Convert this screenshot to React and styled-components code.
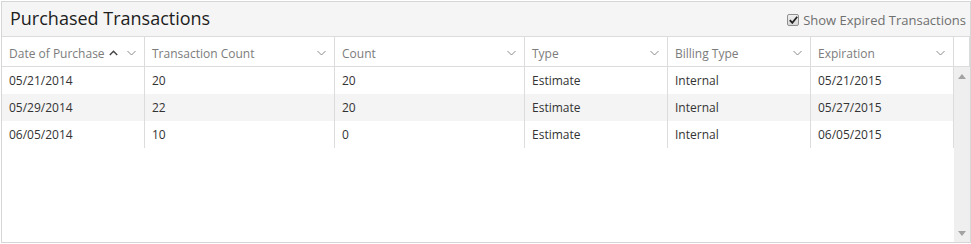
import React from 'react';
import styled, { createGlobalStyle } from 'styled-components';

const Global = createGlobalStyle`
  html, body { margin: 0; padding: 0; background: #fff; }
  body { font-family: 'Open Sans', 'Liberation Sans', sans-serif; }
`;

const Wrap = styled.div`
  padding: 1px 0 0 1px;
`;

const Panel = styled.div`
  width: 970px;
  height: 242px;
  box-sizing: border-box;
  border: 1px solid #d6d6d6;
  display: flex;
  flex-direction: column;
  background: #fff;
`;

const Header = styled.div`
  height: 35px;
  box-sizing: border-box;
  background: #f5f5f5;
  border-bottom: 1px solid #dcdcdc;
  display: flex;
  align-items: center;
  justify-content: space-between;
  padding: 0 4px 0 8px;
`;

const Title = styled.h2`
  margin: 0;
  font-size: 18px;
  font-weight: 400;
  color: #1d1d1d;
  position: relative;
  top: -1px;
`;

const CheckLabel = styled.label`
  display: flex;
  align-items: center;
  gap: 4px;
  font-size: 13px;
  color: #6f6f6f;
  position: relative;
  top: 1px;
`;

const Box = styled.span`
  width: 10px;
  height: 10px;
  border: 1px solid #8f8f8f;
  border-radius: 2px;
  background: linear-gradient(#f0f0f0, #d8d8d8);
  display: flex;
  align-items: center;
  justify-content: center;
`;

const Cols = '143px 190px 190px 143px 143px 143px 16px';

const HeadRow = styled.div`
  display: grid;
  grid-template-columns: ${Cols};
  height: 30px;
  box-sizing: border-box;
  border-bottom: 1px solid #dcdcdc;
`;

const HeadCell = styled.div`
  border-right: 1px solid #dcdcdc;
  display: flex;
  align-items: center;
  padding: 3px 8px 0 7px;
  font-size: 12px;
  color: #7c7c7c;
`;

const HeadLabel = styled.span`
  flex: 1;
  display: flex;
  align-items: center;
  gap: 4px;
`;

const Body = styled.div`
  flex: 1;
  display: flex;
  min-height: 0;
`;

const Rows = styled.div`
  flex: 1;
  display: flex;
  flex-direction: column;
`;

const Row = styled.div`
  display: grid;
  grid-template-columns: 143px 190px 190px 143px 143px 143px;
  height: 27px;
  background: ${p => (p.$alt ? '#f4f4f4' : '#fff')};
`;

const Cell = styled.div`
  border-right: 1px solid #dcdcdc;
  display: flex;
  align-items: center;
  padding: 0 7px;
  font-size: 12px;
  color: #333;
`;

const Scroll = styled.div`
  width: 16px;
  background: #efefef;
  display: flex;
  flex-direction: column;
  justify-content: space-between;
  align-items: center;
  padding: 7px 0 6px;
  box-sizing: border-box;
`;

const Chevron = () => (
  <svg width="9" height="6" viewBox="0 0 9 6" fill="none" stroke="#8a8a8a" strokeWidth="1">
    <polyline points="0.5,1 4.5,5 8.5,1" />
  </svg>
);

const SortUp = () => (
  <svg width="9" height="6" viewBox="0 0 9 6" fill="none" stroke="#444" strokeWidth="1.4">
    <polyline points="0.8,5 4.5,1.2 8.2,5" />
  </svg>
);

const Tri = ({ down }) => (
  <svg width="8" height="5" viewBox="0 0 8 5">
    <polygon points={down ? '0,0 8,0 4,5' : '0,5 8,5 4,0'} fill="#a3a3a3" />
  </svg>
);

const columns = ['Date of Purchase', 'Transaction Count', 'Count', 'Type', 'Billing Type', 'Expiration'];

const data = [
  ['05/21/2014', '20', '20', 'Estimate', 'Internal', '05/21/2015'],
  ['05/29/2014', '22', '20', 'Estimate', 'Internal', '05/27/2015'],
  ['06/05/2014', '10', '0', 'Estimate', 'Internal', '06/05/2015'],
];

export default function App() {
  return (
    <Wrap>
      <Global />
      <Panel>
        <Header>
          <Title>Purchased Transactions</Title>
          <CheckLabel>
            <Box>
              <svg width="9" height="8" viewBox="0 0 9 8">
                <path d="M0.8 4.2 L3.3 6.8 L8.2 0.8" fill="none" stroke="#222" strokeWidth="1.8" />
              </svg>
            </Box>
            Show Expired Transactions
          </CheckLabel>
        </Header>
        <HeadRow>
          {columns.map((c, i) => (
            <HeadCell key={c}>
              <HeadLabel>
                {c}
                {i === 0 && <SortUp />}
              </HeadLabel>
              <Chevron />
            </HeadCell>
          ))}
          <HeadCell />
        </HeadRow>
        <Body>
          <Rows>
            {data.map((r, i) => (
              <Row key={i} $alt={i === 1}>
                {r.map((v, j) => (
                  <Cell key={j}>{v}</Cell>
                ))}
              </Row>
            ))}
          </Rows>
          <Scroll>
            <Tri />
            <Tri down />
          </Scroll>
        </Body>
      </Panel>
    </Wrap>
  );
}
